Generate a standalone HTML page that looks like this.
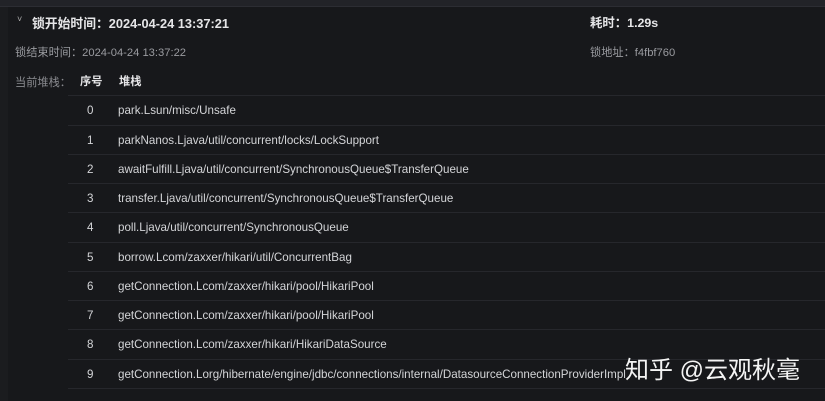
<!DOCTYPE html><html><head><meta charset="utf-8"><style>
html,body{margin:0;width:825px;height:401px;overflow:hidden}
body{background:#1b1c1f;font-family:"Liberation Sans","Noto Sans CJK SC",sans-serif;position:relative}
.top{position:absolute;left:0;top:0;width:825px;height:6px;background:#222328;border-bottom:1px solid #2c2d33}
.panel{position:absolute;left:8px;top:7px;width:817px;height:394px;background:#17181b}
.t{position:absolute;white-space:nowrap;font-size:11.2px}
.row{position:absolute;left:68px;width:757px;height:29px;border-top:1px solid #26272c}
.row span{position:absolute;top:8px;font-size:11.6px;color:#d4d5d8}
.row .n{left:19px}.row .s{left:50px}
</style></head><body>
<div class="top"></div><div class="panel"></div>
<div class="t" style="left:17px;top:14px;color:#aaa;font-size:9px">˅</div>
<div class="t" style="left:32px;top:13px;color:#e6e6e8;font-weight:bold;font-size:12.8px">锁开始时间：2024-04-24 13:37:21</div>
<div class="t" style="left:590px;top:13px;color:#e6e6e8;font-weight:bold;font-size:12.4px">耗时：1.29s</div>
<div class="t" style="left:15px;top:44px;color:#9a9ba0">锁结束时间：2024-04-24 13:37:22</div>
<div class="t" style="left:590px;top:44px;color:#9a9ba0">锁地址：f4fbf760</div>
<div class="t" style="left:15px;top:74px;color:#8a8b90">当前堆栈：</div>
<div class="t" style="left:80px;top:73px;color:#e6e6e8;font-weight:bold">序号</div>
<div class="t" style="left:119px;top:73px;color:#e6e6e8;font-weight:bold">堆栈</div>
<div class="row" style="top:95px"><span class="n">0</span><span class="s">park.Lsun/misc/Unsafe</span></div>
<div class="row" style="top:125px"><span class="n">1</span><span class="s">parkNanos.Ljava/util/concurrent/locks/LockSupport</span></div>
<div class="row" style="top:154px"><span class="n">2</span><span class="s">awaitFulfill.Ljava/util/concurrent/SynchronousQueue$TransferQueue</span></div>
<div class="row" style="top:183px"><span class="n">3</span><span class="s">transfer.Ljava/util/concurrent/SynchronousQueue$TransferQueue</span></div>
<div class="row" style="top:212px"><span class="n">4</span><span class="s">poll.Ljava/util/concurrent/SynchronousQueue</span></div>
<div class="row" style="top:242px"><span class="n">5</span><span class="s">borrow.Lcom/zaxxer/hikari/util/ConcurrentBag</span></div>
<div class="row" style="top:271px"><span class="n">6</span><span class="s">getConnection.Lcom/zaxxer/hikari/pool/HikariPool</span></div>
<div class="row" style="top:300px"><span class="n">7</span><span class="s">getConnection.Lcom/zaxxer/hikari/pool/HikariPool</span></div>
<div class="row" style="top:329px"><span class="n">8</span><span class="s">getConnection.Lcom/zaxxer/hikari/HikariDataSource</span></div>
<div class="row" style="top:359px"><span class="n">9</span><span class="s">getConnection.Lorg/hibernate/engine/jdbc/connections/internal/DatasourceConnectionProviderImpl</span></div>
<div class="row" style="top:388px"></div>
<div class="t" style="left:625px;top:350px;color:#f4f4f4;font-size:24px">知乎 @云观秋毫</div>
</body></html>
